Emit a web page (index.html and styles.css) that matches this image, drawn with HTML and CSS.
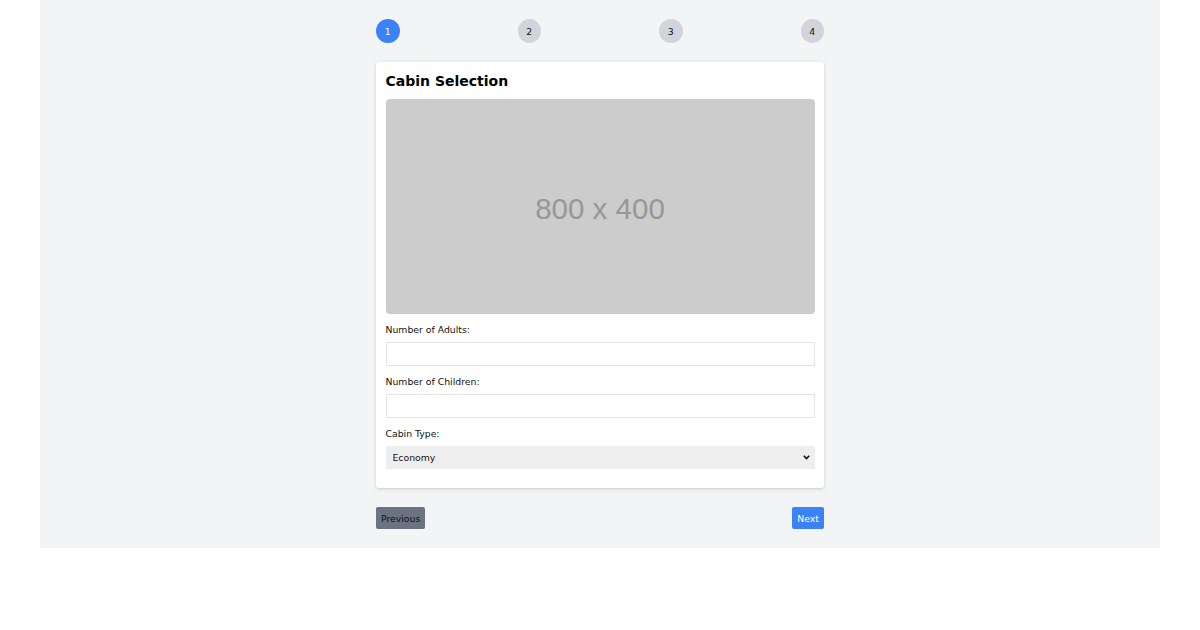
FILE: index.html
```html
<!DOCTYPE html>
<html>
<head>
<meta charset="utf-8">
<link rel="stylesheet" href="styles.css">
</head>
<body>
<div class="page">
  <div class="wrap">
    <div class="steps">
      <div class="step active">1</div>
      <div class="step">2</div>
      <div class="step">3</div>
      <div class="step">4</div>
    </div>
    <div class="card">
      <h2 class="title">Cabin Selection</h2>
      <div class="placeholder">800 x 400</div>
      <div class="field">
        <label class="label">Number of Adults:</label>
        <input class="input" type="number">
      </div>
      <div class="field">
        <label class="label">Number of Children:</label>
        <input class="input" type="number">
      </div>
      <div class="field">
        <label class="label">Cabin Type:</label>
        <div class="select-wrap">
          <select class="select">
            <option>Economy</option>
          </select>
          <svg class="chevron" width="7" height="5" viewBox="0 0 7 5"><path d="M0.8 0.8 L3.5 3.6 L6.2 0.8" fill="none" stroke="#111" stroke-width="1.6"/></svg>
        </div>
      </div>
    </div>
    <div class="nav">
      <button class="btn prev">Previous</button>
      <button class="btn next">Next</button>
    </div>
  </div>
</div>
</body>
</html>
```
FILE: styles.css
```css
body {
  margin: 0;
  font-family: "DejaVu Sans", sans-serif;
  background: #fff;
}
.page {
  margin: 0 40px;
  background: #f3f4f6;
  padding: 19px 0 19px;
}
.wrap {
  width: 448px;
  margin: 0 auto;
}
.steps {
  display: flex;
  justify-content: space-between;
  margin-bottom: 19px;
}
.step {
  width: 23.5px;
  height: 24px;
  border-radius: 50%;
  background: #d1d5db;
  color: #111;
  font-size: 9.3px;
  display: flex;
  align-items: center;
  justify-content: center;
}
.step.active {
  background: #3b82f6;
  color: #fff;
}
.card {
  background: #fff;
  border-radius: 3px;
  box-shadow: 0 1px 4px rgba(0,0,0,0.12), 0 1px 2px rgba(0,0,0,0.06);
  padding: 10px 9.5px 19px;
}
.title {
  margin: 0 0 9px;
  font-size: 14px;
  line-height: 18px;
  font-weight: bold;
  color: #000;
}
.placeholder {
  box-sizing: border-box;
  height: 215px;
  padding-top: 5px;
  background: #cccccc;
  border-radius: 4px;
  display: flex;
  align-items: center;
  justify-content: center;
  font-family: "Liberation Sans", Arial, sans-serif;
  font-size: 29.5px;
  color: #979797;
}
.field {
  margin-top: 10px;
}
.label {
  display: block;
  font-size: 9.3px;
  line-height: 12px;
  color: #111;
  margin-bottom: 6px;
}
.input {
  display: block;
  box-sizing: border-box;
  width: 100%;
  height: 24px;
  border: 1px solid #e5e5e5;
  background: #fff;
  margin: 0;
  padding: 0 6px;
}
.select-wrap {
  position: relative;
}
.select {
  display: block;
  box-sizing: border-box;
  width: 100%;
  height: 23px;
  border: none;
  border-radius: 0;
  -webkit-appearance: none;
  appearance: none;
  background: #eeeeee;
  font-family: "DejaVu Sans", sans-serif;
  font-size: 9.3px;
  color: #111;
  padding: 0 7px;
  margin: 0;
}
.chevron {
  position: absolute;
  right: 5px;
  top: 9px;
  pointer-events: none;
}
.nav {
  display: flex;
  justify-content: space-between;
  margin-top: 19px;
}
.btn {
  font-family: "DejaVu Sans", sans-serif;
  font-size: 9.3px;
  font-weight: normal;
  height: 22px;
  padding: 0 5px;
  border: none;
  border-radius: 2px;
  margin: 0;
}
.prev {
  background: #6b7280;
  color: #111;
}
.next {
  background: #3b82f6;
  color: #fff;
}
```
